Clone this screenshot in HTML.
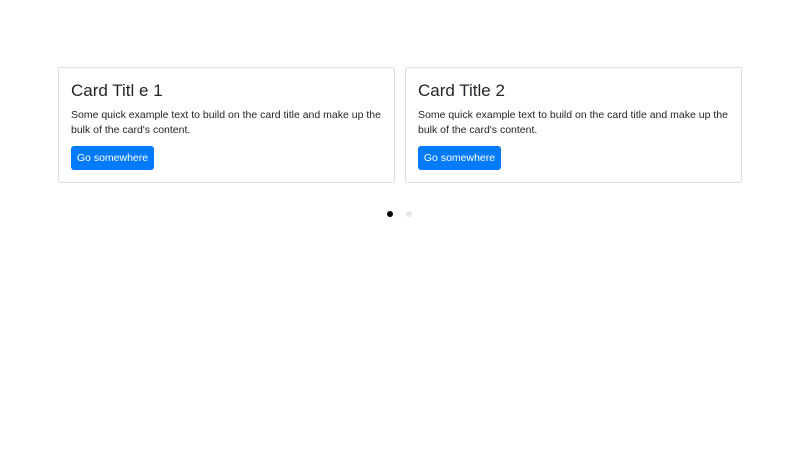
<!DOCTYPE html>
<html><head><style>
body{margin:0;width:800px;height:450px;background:#fff;font-family:"Liberation Sans",sans-serif;color:#212529;position:relative}
.card{position:absolute;top:67px;width:337px;height:116px;border:1px solid #dfdfdf;border-radius:3px;box-sizing:border-box}
.t{position:absolute;left:12px;top:13px;font-size:17px}
.p{position:absolute;left:12px;top:40px;font-size:10.5px;line-height:15px;width:312px}
.b{position:absolute;left:12px;top:78px;width:83px;height:24px;background:#007bff;color:#fff;border-radius:3px;font-size:10.5px;line-height:24px;text-align:center}
.d{position:absolute;top:211px;width:6px;height:6px;border-radius:50%}
</style></head><body>
<div class="card" style="left:58px"><div class="t">Card Titl e 1</div><div class="p">Some quick example text to build on the card title and make up the bulk of the card's content.</div><div class="b">Go somewhere</div></div>
<div class="card" style="left:405px"><div class="t">Card Title 2</div><div class="p">Some quick example text to build on the card title and make up the bulk of the card's content.</div><div class="b">Go somewhere</div></div>
<div class="d" style="left:387px;background:#000"></div>
<div class="d" style="left:406px;background:#e8e8e8"></div>
</body></html>
